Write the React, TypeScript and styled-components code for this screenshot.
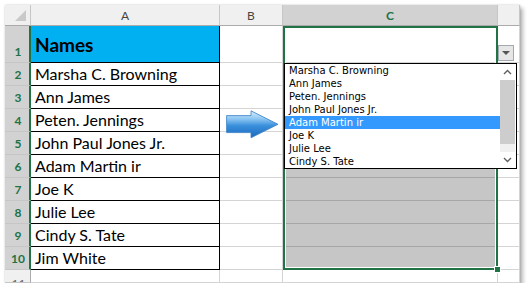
import styled, { createGlobalStyle, css } from "styled-components";

const GREEN = "#217346";
const GRID = "#d4d4d4";

const names = [
  "Marsha C. Browning",
  "Ann James",
  "Peten. Jennings",
  "John Paul Jones Jr.",
  "Adam Martin ir",
  "Joe K",
  "Julie Lee",
  "Cindy S. Tate",
  "Jim White",
];

const listItems = names.slice(0, 8);

const GlobalStyle = createGlobalStyle`
  html, body {
    margin: 0;
    padding: 0;
    background: #fff;
  }
  body {
    font-family: Lato, "Liberation Sans", sans-serif;
  }
`;

const Page = styled.div`
  padding: 5px 0 0 5px;
`;

const Sheet = styled.div`
  position: relative;
  display: grid;
  grid-template-columns: 26px 189px 63px 215px 22px;
  grid-template-rows: 21px 37px repeat(9, 23px) 13px;
  width: 515px;
  background: #fff;
  box-shadow: 0 0 2px rgba(0, 0, 0, 0.2), 3px 3px 4px rgba(0, 0, 0, 0.28);
`;

const Corner = styled.div`
  position: relative;
  box-sizing: border-box;
  background: #f0f0f0;
  border-right: 1px solid #c6c6c6;
  border-bottom: 1px solid #ababab;

  &::after {
    content: "";
    position: absolute;
    right: 4px;
    bottom: 4px;
    border-style: solid;
    border-width: 0 0 11px 11px;
    border-color: transparent transparent #c9c9c9 transparent;
  }
`;

const ColHeader = styled.div<{ $active?: boolean }>`
  box-sizing: border-box;
  display: flex;
  align-items: center;
  justify-content: center;
  padding-top: 1px;
  font-size: 12px;
  background: ${(p) => (p.$active ? "#d2d2d2" : "#f0f0f0")};
  color: ${(p) => (p.$active ? GREEN : "#444")};
  font-weight: ${(p) => (p.$active ? 700 : 400)};
  border-right: 1px solid #c6c6c6;
  border-bottom: 1px solid #ababab;
`;

const RowHeader = styled.div<{ $active?: boolean }>`
  box-sizing: border-box;
  display: flex;
  align-items: flex-end;
  justify-content: center;
  overflow: hidden;
  padding-bottom: 4px;
  padding-left: 2px;
  font-size: 12px;
  line-height: 12px;
  font-weight: 700;
  background: ${(p) => (p.$active ? "#d2d2d2" : "#f0f0f0")};
  color: ${(p) => (p.$active ? GREEN : "#666")};
  border-bottom: 1px solid #c6c6c6;
  border-right: ${(p) => (p.$active ? `2px solid ${GREEN}` : "1px solid #ababab")};
`;

const RowHeaderLast = styled(RowHeader)`
  align-items: flex-start;
  padding-top: 8px;
  font-weight: 400;
`;

type CellKind = "title" | "name" | "plain" | "picked" | "active";

const Cell = styled.div<{ $kind: CellKind }>`
  box-sizing: border-box;
  display: flex;
  align-items: flex-end;
  padding: 0 4px 1px;
  color: #000;
  white-space: nowrap;
  border-right: 1px solid ${GRID};
  border-bottom: 1px solid ${GRID};

  ${(p) =>
    p.$kind === "title" &&
    css`
      align-items: center;
      padding: 1px 4px 0;
      background: #00b0f0;
      font-size: 19px;
      font-weight: 700;
      border-right-color: #000;
      border-bottom-color: #000;
    `}

  ${(p) =>
    p.$kind === "name" &&
    css`
      font-size: 16px;
      line-height: 20px;
      border-right-color: #000;
      border-bottom-color: #000;
    `}

  ${(p) =>
    p.$kind === "picked" &&
    css`
      background: #c6c6c6;
      border-right: none;
      border-bottom-color: #a6a6a6;
    `}
`;

/* absolutely placed grid children take a grid area without joining auto-placement */
const Selection = styled.div`
  position: absolute;
  inset: 0;
  grid-column: 4 / 5;
  grid-row: 2 / 12;
  z-index: 2;
  box-sizing: border-box;
  border: 2px solid ${GREEN};
  box-shadow: inset 0 0 0 1px #fff;
  pointer-events: none;

  &::after {
    content: "";
    position: absolute;
    right: -5px;
    bottom: -5px;
    width: 5px;
    height: 5px;
    background: ${GREEN};
    border: 1px solid #fff;
  }
`;

const DropButton = styled.div`
  position: absolute;
  grid-column: 5 / 6;
  grid-row: 2 / 3;
  left: 0;
  bottom: 2px;
  z-index: 3;
  box-sizing: border-box;
  width: 16px;
  height: 16px;
  display: flex;
  align-items: center;
  justify-content: center;
  background: #e6e6e6;
  border: 1px solid #a3a9b1;

  &::after {
    content: "";
    border-style: solid;
    border-width: 4px 4px 0 4px;
    border-color: #555 transparent transparent transparent;
  }
`;

const DropList = styled.div`
  position: absolute;
  left: 279px;
  top: 58px;
  z-index: 4;
  box-sizing: border-box;
  width: 233px;
  height: 106px;
  display: flex;
  background: #fff;
  border: 1px solid #000;
  font-family: "DejaVu Sans", Verdana, sans-serif;
  font-size: 10px;
`;

const Items = styled.div`
  flex: 1;
  display: flex;
  flex-direction: column;
`;

const Item = styled.div<{ $selected?: boolean }>`
  height: 13px;
  line-height: 13px;
  padding-left: 4px;
  white-space: nowrap;
  background: ${(p) => (p.$selected ? "#3399ff" : "transparent")};
  color: ${(p) => (p.$selected ? "#fff" : "#000")};
`;

const ScrollBar = styled.div`
  width: 15px;
  margin-right: 1px;
  display: flex;
  flex-direction: column;
  background: #f0f0f0;
`;

const ScrollArrow = styled.div`
  height: 16px;
  display: flex;
  align-items: center;
  justify-content: center;
  background: #fff;
`;

const Thumb = styled.div`
  height: 64px;
  background: #cdcdcd;
`;

const Track = styled.div`
  flex: 1;
`;

const ArrowShape = styled.svg`
  position: absolute;
  left: 221px;
  top: 105px;
  z-index: 2;
`;

function Chevron({ up }: { up?: boolean }) {
  return (
    <svg width="9" height="6" viewBox="0 0 9 6">
      <polyline
        points={up ? "1,5 4.5,1.5 8,5" : "1,1 4.5,4.5 8,1"}
        fill="none"
        stroke="#606060"
        strokeWidth="1.4"
      />
    </svg>
  );
}

function BlueArrow() {
  return (
    <ArrowShape width="53" height="29" viewBox="0 0 53 29">
      <defs>
        <linearGradient id="arrowFill" x1="0" y1="0" x2="0" y2="1">
          <stop offset="0" stopColor="#d8eefc" />
          <stop offset="0.3" stopColor="#8cc6f2" />
          <stop offset="0.55" stopColor="#3a90dc" />
          <stop offset="1" stopColor="#1b68bd" />
        </linearGradient>
      </defs>
      <path
        d="M0.6 5.6 H25 V0.8 L52 14.3 L25 27.8 V22.6 H0.6 Z"
        fill="url(#arrowFill)"
        stroke="#3a7fc4"
        strokeWidth="0.8"
        strokeLinejoin="round"
      />
    </ArrowShape>
  );
}

function Row({ index, name }: { index: number; name: string }) {
  return (
    <>
      <RowHeader $active>{index}</RowHeader>
      <Cell $kind="name">{name}</Cell>
      <Cell $kind="plain" />
      <Cell $kind="picked" />
      <Cell $kind="plain" />
    </>
  );
}

export default function App() {
  return (
    <>
      <GlobalStyle />
      <Page>
        <Sheet>
          <Corner />
          <ColHeader>A</ColHeader>
          <ColHeader>B</ColHeader>
          <ColHeader $active>C</ColHeader>
          <ColHeader />

          <RowHeader $active>1</RowHeader>
          <Cell $kind="title">Names</Cell>
          <Cell $kind="plain" />
          <Cell $kind="active" />
          <Cell $kind="plain" />

          {names.map((name, i) => (
            <Row key={name} index={i + 2} name={name} />
          ))}

          <RowHeaderLast>11</RowHeaderLast>
          <Cell $kind="plain" />
          <Cell $kind="plain" />
          <Cell $kind="plain" />
          <Cell $kind="plain" />

          <Selection />
          <DropButton />

          <DropList>
            <Items>
              {listItems.map((name) => (
                <Item key={name} $selected={name === "Adam Martin ir"}>
                  {name}
                </Item>
              ))}
            </Items>
            <ScrollBar>
              <ScrollArrow>
                <Chevron up />
              </ScrollArrow>
              <Thumb />
              <Track />
              <ScrollArrow>
                <Chevron />
              </ScrollArrow>
            </ScrollBar>
          </DropList>

          <BlueArrow />
        </Sheet>
      </Page>
    </>
  );
}
